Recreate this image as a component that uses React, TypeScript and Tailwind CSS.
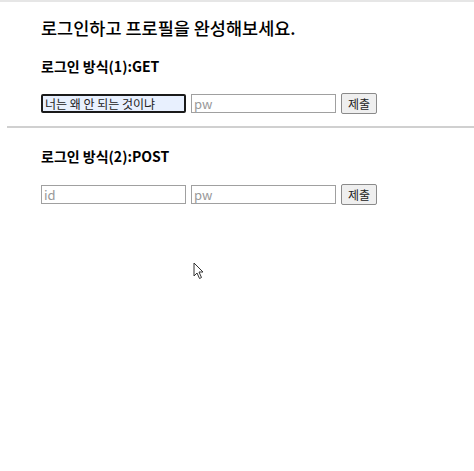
import React from 'react';

const font = { fontFamily: '"Noto Sans CJK KR", "Noto Sans", sans-serif' };

const Row = ({ idValue }: { idValue?: string }) => (
  <div className="flex items-center gap-[5px]">
    {idValue ? (
      <input
        readOnly
        value={idValue}
        className="w-[145px] h-[19px] border-2 border-[#1a1a1a] rounded-[2px] bg-[#e8f0fe] px-[2px] text-[12px] text-[#222] outline-none"
      />
    ) : (
      <input
        readOnly
        placeholder="id"
        className="w-[145px] h-[19px] border border-[#a0a0a0] bg-white px-[2px] text-[13px] placeholder:text-[#999] outline-none"
      />
    )}
    <input
      readOnly
      placeholder="pw"
      className="w-[145px] h-[19px] border border-[#a0a0a0] bg-white px-[2px] text-[13px] placeholder:text-[#999] outline-none"
    />
    <button className="w-[36px] h-[21px] border border-[#8a8a8a] rounded-[2px] bg-[#efefef] text-[12px] text-[#222] leading-none">
      제출
    </button>
  </div>
);

export default function App() {
  return (
    <div className="relative w-[474px] h-[471px] bg-white border-t-2 border-[#e6e6e6] text-black" style={font}>
      <div className="pl-[41px] pt-[14px] flex flex-col">
        <h1 className="text-[17.5px] leading-[24px] font-medium">로그인하고 프로필을 완성해보세요.</h1>
        <h2 className="mt-[17px] text-[14px] leading-[19px] font-bold">로그인 방식(1):GET</h2>
        <div className="mt-[17px]">
          <Row idValue="너는 왜 안 되는 것이냐" />
        </div>
      </div>
      <hr className="mt-[12px] ml-[7px] border-0 h-[2px] bg-[#d0d0d0]" />
      <div className="pl-[41px] flex flex-col">
        <h2 className="mt-[19px] text-[14px] leading-[19px] font-bold">로그인 방식(2):POST</h2>
        <div className="mt-[18px]">
          <Row />
        </div>
      </div>
      <svg className="absolute left-[193px] top-[260px]" width="12" height="18" viewBox="0 0 12 18">
        <path d="M1 1 L1 14 L4 11 L6.5 16.5 L8.5 15.5 L6 10 L10 10 Z" fill="white" stroke="#333" strokeWidth="1" strokeLinejoin="round" />
      </svg>
    </div>
  );
}
